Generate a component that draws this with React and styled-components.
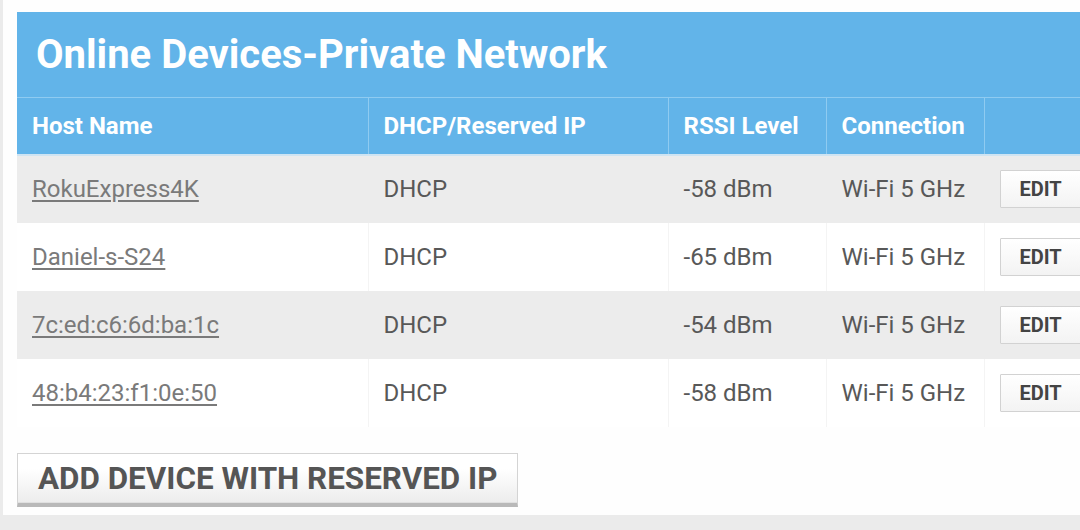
import styled, { createGlobalStyle } from 'styled-components';

const GlobalStyle = createGlobalStyle`
  html, body {
    margin: 0;
    padding: 0;
    background: #ebebeb;
    font-family: Roboto, "Liberation Sans", sans-serif;
    overflow: hidden;
  }
`;

const Page = styled.div`
  width: 1080px;
  height: 530px;
  overflow: hidden;
  background: #ebebeb;
`;

const Panel = styled.div`
  margin-left: 3px;
  width: 1200px;
  height: 515px;
  background: #fefefe;
  padding: 12px 0 0 14px;
  box-sizing: border-box;
`;

const TitleBar = styled.div`
  width: 1160px;
  height: 85px;
  background: #62b4e9;
  display: flex;
  align-items: center;
  padding-left: 19px;
  box-sizing: border-box;
  color: #fff;
  font-size: 40px;
  font-weight: 700;
`;

const Table = styled.table`
  width: 1160px;
  border-collapse: collapse;
  table-layout: fixed;
`;

const HeadCell = styled.th`
  height: 57px;
  padding: 0 0 0 15px;
  background: #62b4e9;
  color: #fff;
  font-size: 24px;
  font-weight: 700;
  text-align: left;
  border-top: 1px solid #8fcbf1;
  border-left: ${(p) => (p.first ? 'none' : '1px solid #8fcbf1')};
  border-bottom: 2px solid #cfe4f2;
  box-sizing: border-box;
`;

const Row = styled.tr`
  background: ${(p) => (p.shaded ? '#ececec' : '#ffffff')};
`;

const Cell = styled.td`
  height: 68px;
  padding: 0 0 0 15px;
  color: #585858;
  font-size: 24px;
  border-left: ${(p) => (p.first ? 'none' : `1px solid ${p.shaded ? '#ececec' : '#f4f4f4'}`)};
  box-sizing: border-box;
`;

const HostLink = styled.a`
  color: #7a7a7a;
  text-decoration: underline;
  text-underline-offset: 3px;
`;

const EditButton = styled.button`
  width: 90px;
  height: 38px;
  background: linear-gradient(#ffffff, #f3f3f3);
  border: 1px solid #d2d2d2;
  border-radius: 1px;
  font-family: Roboto, "Liberation Sans", sans-serif;
  font-size: 20px;
  font-weight: 700;
  color: #444;
  text-align: left;
  padding-left: 19px;
`;

const Footer = styled.div`
  padding-top: 26px;
`;

const AddButton = styled.button`
  width: 501px;
  height: 54px;
  background: linear-gradient(#ffffff 30%, #ececec);
  border: 1px solid #d4d4d4;
  border-bottom: 4px solid #b9b9b9;
  box-shadow: inset 0 -1px 0 #e0e0e0;
  font-family: Roboto, "Liberation Sans", sans-serif;
  font-size: 31.4px;
  font-weight: 700;
  color: #555;
  text-align: left;
  padding: 0 0 0 20px;
  box-sizing: border-box;
`;

const devices = [
  { name: 'RokuExpress4K', ip: 'DHCP', rssi: '-58 dBm', conn: 'Wi-Fi 5 GHz' },
  { name: 'Daniel-s-S24', ip: 'DHCP', rssi: '-65 dBm', conn: 'Wi-Fi 5 GHz' },
  { name: '7c:ed:c6:6d:ba:1c', ip: 'DHCP', rssi: '-54 dBm', conn: 'Wi-Fi 5 GHz' },
  { name: '48:b4:23:f1:0e:50', ip: 'DHCP', rssi: '-58 dBm', conn: 'Wi-Fi 5 GHz' },
];

export default function App() {
  return (
    <Page>
      <GlobalStyle />
      <Panel>
        <TitleBar>Online Devices-Private Network</TitleBar>
        <Table>
          <colgroup>
            <col style={{ width: 351 }} />
            <col style={{ width: 300 }} />
            <col style={{ width: 158 }} />
            <col style={{ width: 158 }} />
            <col style={{ width: 193 }} />
          </colgroup>
          <thead>
            <tr>
              <HeadCell first>Host Name</HeadCell>
              <HeadCell>DHCP/Reserved IP</HeadCell>
              <HeadCell>RSSI Level</HeadCell>
              <HeadCell>Connection</HeadCell>
              <HeadCell />
            </tr>
          </thead>
          <tbody>
            {devices.map((d, i) => {
              const shaded = i % 2 === 0;
              return (
                <Row key={d.name} shaded={shaded}>
                  <Cell first shaded={shaded}>
                    <HostLink href="#">{d.name}</HostLink>
                  </Cell>
                  <Cell shaded={shaded}>{d.ip}</Cell>
                  <Cell shaded={shaded}>{d.rssi}</Cell>
                  <Cell shaded={shaded}>{d.conn}</Cell>
                  <Cell shaded={shaded}>
                    <EditButton>EDIT</EditButton>
                  </Cell>
                </Row>
              );
            })}
          </tbody>
        </Table>
        <Footer>
          <AddButton>ADD DEVICE WITH RESERVED IP</AddButton>
        </Footer>
      </Panel>
    </Page>
  );
}
